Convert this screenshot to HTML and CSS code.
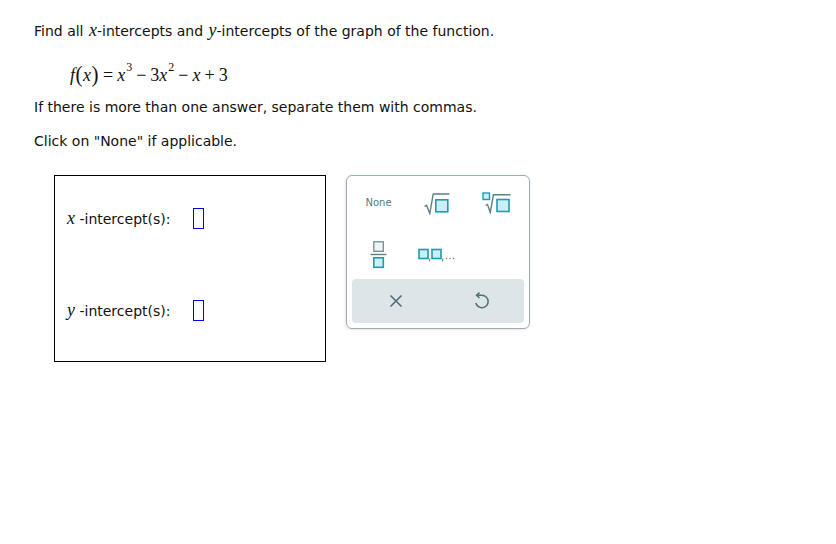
FILE: index.html
```html
<!DOCTYPE html>
<html>
<head>
<meta charset="utf-8">
<link rel="stylesheet" href="styles.css">
</head>
<body>
<div class="page">
  <p class="line first">Find all <span class="mv">x</span>-intercepts and <span class="mv">y</span>-intercepts of the graph of the function.</p>
  <div class="formula"><span class="mi">f</span><span class="paren">(</span><span class="mi">x</span><span class="paren">)</span><span class="op">=</span><span class="mi">x</span><sup>3</sup><span class="op">−</span>3<span class="mi">x</span><sup>2</sup><span class="op">−</span><span class="mi">x</span><span class="op">+</span>3</div>
  <p class="line second">If there is more than one answer, separate them with commas.</p>
  <p class="line third">Click on "None" if applicable.</p>

  <div class="work">
    <div class="answers">
      <div class="row"><span class="lbl"><span class="mv">x</span> -intercept(s):</span><span class="inp"></span></div>
      <div class="row"><span class="lbl"><span class="mv">y</span> -intercept(s):</span><span class="inp"></span></div>
    </div>

    <div class="keypad">
      <div class="keys">
        <div class="key none">None</div>
        <div class="key">
          <svg width="26" height="23" viewBox="0 0 26 23">
            <path d="M0.5 14.5 L2.6 13.3 L5.8 21.5 L9.2 2 L25.5 2" fill="none" stroke="#5f7f89" stroke-width="1.4"/>
            <rect x="11.8" y="7.8" width="12" height="12" fill="#cdeef4" stroke="#1a9db1" stroke-width="1.6"/>
          </svg>
        </div>
        <div class="key">
          <svg width="29" height="22" viewBox="0 0 29 22">
            <rect x="1" y="1" width="6.5" height="6.5" fill="#cdeef4" stroke="#1a9db1" stroke-width="1.4"/>
            <path d="M3.5 13.5 L5.5 12.4 L8.3 20.5 L11.4 2.8 L28.5 2.8" fill="none" stroke="#5f7f89" stroke-width="1.4"/>
            <rect x="15" y="7.5" width="12" height="12" fill="#cdeef4" stroke="#1a9db1" stroke-width="1.6"/>
          </svg>
        </div>
        <div class="key">
          <svg width="17" height="29" viewBox="0 0 17 29">
            <rect x="3.8" y="1.8" width="9.5" height="9.5" fill="#eef3f4" stroke="#6f8d96" stroke-width="1.3"/>
            <line x1="0.5" y1="14.5" x2="16.5" y2="14.5" stroke="#5f7f89" stroke-width="1.4"/>
            <rect x="3.8" y="17.8" width="9.5" height="9.5" fill="#cdeef4" stroke="#1a9db1" stroke-width="1.6"/>
          </svg>
        </div>
        <div class="key seq">
          <svg width="38" height="14" viewBox="0 0 38 14">
            <rect x="1" y="1.5" width="9" height="9" fill="#cdeef4" stroke="#1a9db1" stroke-width="1.6"/>
            <path d="M12 10.5 L11.3 13.5" stroke="#5f7f89" stroke-width="1.1"/>
            <rect x="14" y="1.5" width="9" height="9" fill="#cdeef4" stroke="#1a9db1" stroke-width="1.6"/>
            <path d="M25 10.5 L24.3 13.5" stroke="#5f7f89" stroke-width="1.1"/>
            <circle cx="28.5" cy="10.6" r="0.75" fill="#5f7f89"/>
            <circle cx="32" cy="10.6" r="0.75" fill="#5f7f89"/>
            <circle cx="35.5" cy="10.6" r="0.75" fill="#5f7f89"/>
          </svg>
        </div>
        <div class="key"></div>
      </div>
      <div class="actions">
        <div class="act">
          <svg width="14" height="14" viewBox="0 0 14 14">
            <path d="M1.5 1.5 L12.5 12.5 M12.5 1.5 L1.5 12.5" stroke="#4e6e78" stroke-width="1.6" fill="none"/>
          </svg>
        </div>
        <div class="act">
          <svg width="17" height="18" viewBox="0 0 17 18">
            <path d="M3.6 3.3 L9 3.3 A6.2 6.2 0 1 1 2.9 11" fill="none" stroke="#4e6e78" stroke-width="1.5"/>
            <path d="M6.5 0.6 L3.6 3.3 L6.5 6" fill="none" stroke="#4e6e78" stroke-width="1.5"/>
          </svg>
        </div>
      </div>
    </div>
  </div>
</div>
</body>
</html>
```
FILE: styles.css
```css
html, body {
  margin: 0;
  padding: 0;
  background: #fff;
}
body {
  font-family: "DejaVu Sans", Verdana, sans-serif;
  font-size: 14px;
  color: #111;
}
.page {
  padding: 22px 0 0 34px;
}
.line {
  margin: 0;
  line-height: 17px;
}
.mv {
  font-family: "Liberation Serif", "Times New Roman", serif;
  font-style: italic;
  font-size: 18px;
  margin-left: 1px;
}
.formula {
  font-family: "Liberation Serif", "Times New Roman", serif;
  font-size: 18px;
  margin: 22px 0 0 36px;
  line-height: 24px;
  height: 24px;
}
.formula .mi {
  font-style: italic;
}
.formula .paren {
  font-size: 21px;
  display: inline-block;
  transform: scaleY(1.1);
  margin: 0 0.5px;
}
.formula .op {
  margin: 0 4px;
}
.formula sup {
  font-size: 12px;
  line-height: 0;
  position: relative;
  top: -3px;
  margin-left: 1px;
  vertical-align: super;
}
.second {
  margin-top: 13px;
}
.third {
  margin-top: 17px;
}
.work {
  display: flex;
  align-items: flex-start;
  gap: 20px;
  margin: 25px 0 0 20px;
}
.answers {
  border: 1px solid #000;
  display: flex;
  flex-direction: column;
  padding: 32px 0 0 11px;
  box-sizing: border-box;
  width: 272px;
  height: 187px;
  gap: 71px;
}
.row {
  display: flex;
  align-items: center;
  height: 21px;
}
.lbl {
  width: 127px;
  line-height: 21px;
}
.inp {
  display: inline-block;
  width: 9px;
  height: 19px;
  border: 1px solid #0000ee;
}
.keypad {
  box-sizing: border-box;
  width: 184px;
  height: 154px;
  border: 1px solid #98acb2;
  border-radius: 6px;
  box-shadow: -1px 1px 3px rgba(0, 0, 0, 0.10);
  display: flex;
  flex-direction: column;
  padding: 0 5px 5px 5px;
}
.keys {
  display: grid;
  grid-template-columns: 53px 64px 55px;
  grid-template-rows: 52px 51px;
}
.key {
  display: flex;
  align-items: center;
  justify-content: center;
  padding-top: 2px;
}
.key.none {
  font-size: 10px;
  color: #5a7884;
  padding-top: 0;
}
.actions {
  flex: 1;
  background: #dde5e8;
  border-radius: 4px;
  display: grid;
  grid-template-columns: 87px 1fr;
}
.act {
  display: flex;
  align-items: center;
  justify-content: center;
}
```
